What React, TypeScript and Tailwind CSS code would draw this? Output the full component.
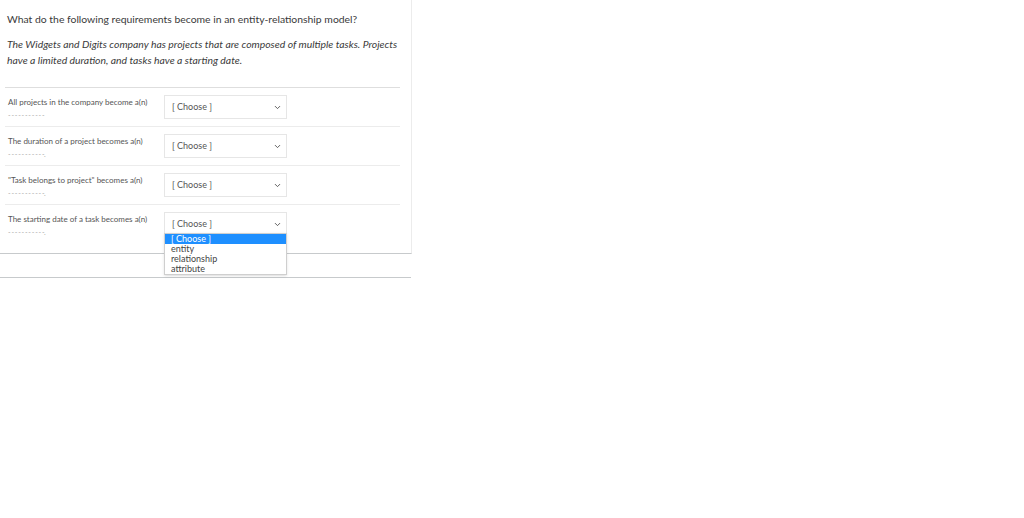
import { ChevronDown } from "lucide-react";

const rows = [
  { label: "All projects in the company become a(n)", tail: "" },
  { label: "The duration of a project becomes a(n)", tail: "." },
  { label: "\"Task belongs to project\" becomes a(n)", tail: "." },
  { label: "The starting date of a task becomes a(n)", tail: "." },
];

const options = ["[ Choose ]", "entity", "relationship", "attribute"];

function Select({ open }: { open?: boolean }) {
  return (
    <div className="relative w-[123px]">
      <div className="flex h-[24px] items-center justify-between border border-[#e6e6e6] bg-white pl-[7px] pr-[4px] text-[9px] text-[#555]">
        <span>[ Choose ]</span>
        <ChevronDown className="h-[9px] w-[9px] text-[#555]" strokeWidth={2.5} />
      </div>
      {open && (
        <div className="absolute left-0 top-[21px] z-10 w-[123px] border border-[#cfcfcf] bg-white text-[9px] leading-[10px] text-[#444] shadow-sm">
          {options.map((o, i) => (
            <div key={o} className={i === 0 ? "bg-[#1e8fff] pl-[6px] text-white" : "pl-[6px]"}>
              {o}
            </div>
          ))}
        </div>
      )}
    </div>
  );
}

export default function App() {
  return (
    <div className="min-h-[518px] w-[1024px] bg-white font-['Lato',sans-serif]">
      <div className="w-[412px] border-r border-b border-r-[#ececec] border-b-[#c7cacc]">
        <div className="px-[7px] pt-[12px]">
          <p className="text-[10.4px] leading-[15px] text-[#3a3a3a]">
            What do the following requirements become in an entity-relationship model?
          </p>
          <p className="mt-[9px] whitespace-nowrap text-[10.4px] italic leading-[16px] text-[#3a3a3a]">
            The Widgets and Digits company has projects that are composed of multiple tasks. Projects
            <br />
            have a limited duration, and tasks have a starting date.
          </p>
        </div>
        <div className="mx-[5px] mt-[19px] w-[395px] border-t border-[#dedede]">
          {rows.map((r, i) => (
            <div
              key={r.label}
              className={
                i < rows.length - 1
                  ? "flex h-[39px] border-b border-[#ececec] pt-[7px]"
                  : "flex h-[48px] pt-[7px]"
              }
            >
              <div className="w-[159px] pl-[3px] pt-[2px] text-[8px] leading-[11px] text-[#555]">
                <div>{r.label}</div>
                <div className="mt-[3px] text-[7px] leading-[8px] tracking-[-0.5px] text-[#aaa]">
                  - - - - - - - - - - -{r.tail}
                </div>
              </div>
              <Select open={i === rows.length - 1} />
            </div>
          ))}
        </div>
      </div>
      <div className="mt-[23px] w-[411px] border-b border-[#c7cacc]" />
    </div>
  );
}
